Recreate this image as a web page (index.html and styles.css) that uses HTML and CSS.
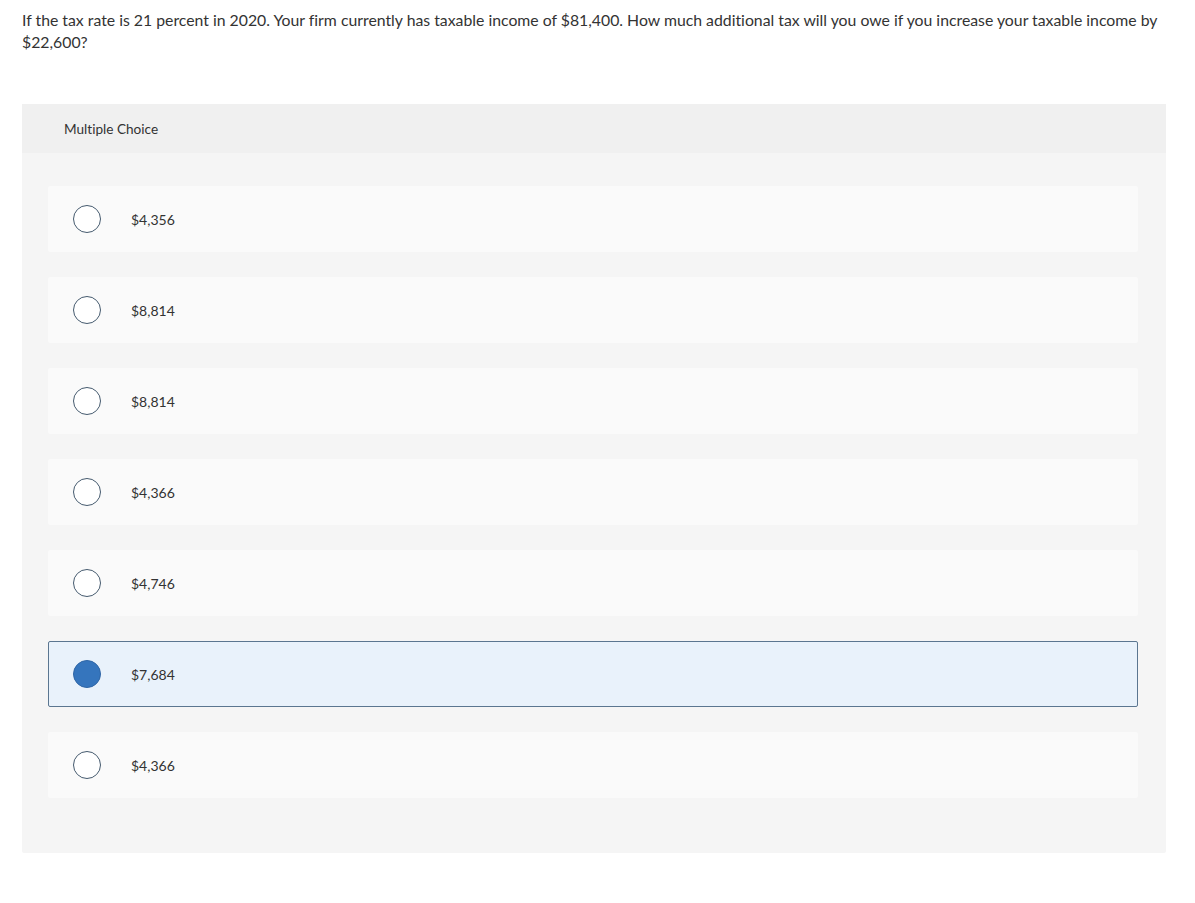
FILE: index.html
```html
<!DOCTYPE html>
<html lang="en">
<head>
<meta charset="utf-8">
<title>Multiple Choice</title>
<link rel="stylesheet" href="styles.css">
</head>
<body>
<div class="page">
  <p class="question">If the tax rate is 21 percent in 2020. Your firm currently has taxable income of $81,400. How much additional tax will you owe if you increase your taxable income by $22,600?</p>
  <section class="mc">
    <div class="mc-header">Multiple Choice</div>
    <div class="mc-options">
      <label class="option"><span class="radio"></span><span class="opt-text">$4,356</span></label>
      <label class="option"><span class="radio"></span><span class="opt-text">$8,814</span></label>
      <label class="option"><span class="radio"></span><span class="opt-text">$8,814</span></label>
      <label class="option"><span class="radio"></span><span class="opt-text">$4,366</span></label>
      <label class="option"><span class="radio"></span><span class="opt-text">$4,746</span></label>
      <label class="option selected"><span class="radio"></span><span class="opt-text">$7,684</span></label>
      <label class="option"><span class="radio"></span><span class="opt-text">$4,366</span></label>
    </div>
  </section>
</div>
</body>
</html>
```
FILE: styles.css
```css
html, body {
  margin: 0;
  padding: 0;
  background: #ffffff;
}
body {
  font-family: Lato, "Open Sans", Arial, sans-serif;
  color: #333333;
  font-variant-ligatures: none;
}
.page {
  width: 1144px;
  padding: 9px 29px 0 22px;
}
.question {
  margin: 0 0 51px 0;
  font-size: 15.8px;
  line-height: 22px;
  color: #333333;
}
.mc {
  background: #f5f5f5;
  border-radius: 2px;
}
.mc-header {
  background: #f0f0f0;
  height: 49px;
  display: flex;
  align-items: center;
  padding-left: 42px;
  font-size: 13.6px;
  color: #333333;
}
.mc-options {
  display: flex;
  flex-direction: column;
  gap: 25px;
  padding: 33px 28px 55px 26px;
}
.option {
  height: 66px;
  box-sizing: border-box;
  background: #fafafa;
  display: flex;
  align-items: center;
  padding-left: 24px;
  border-radius: 2px;
  border: 1px solid transparent;
}
.option.selected {
  background: #e9f2fb;
  border-color: #5b7690;
}
.radio {
  width: 28px;
  height: 28px;
  box-sizing: border-box;
  border-radius: 50%;
  border: 1.5px solid #455a6e;
  background: #ffffff;
  flex: none;
}
.option.selected .radio {
  background: #3575bd;
  border-color: #2f66a6;
}
.opt-text {
  margin-left: 30px;
  font-size: 14px;
  color: #333333;
}
```
